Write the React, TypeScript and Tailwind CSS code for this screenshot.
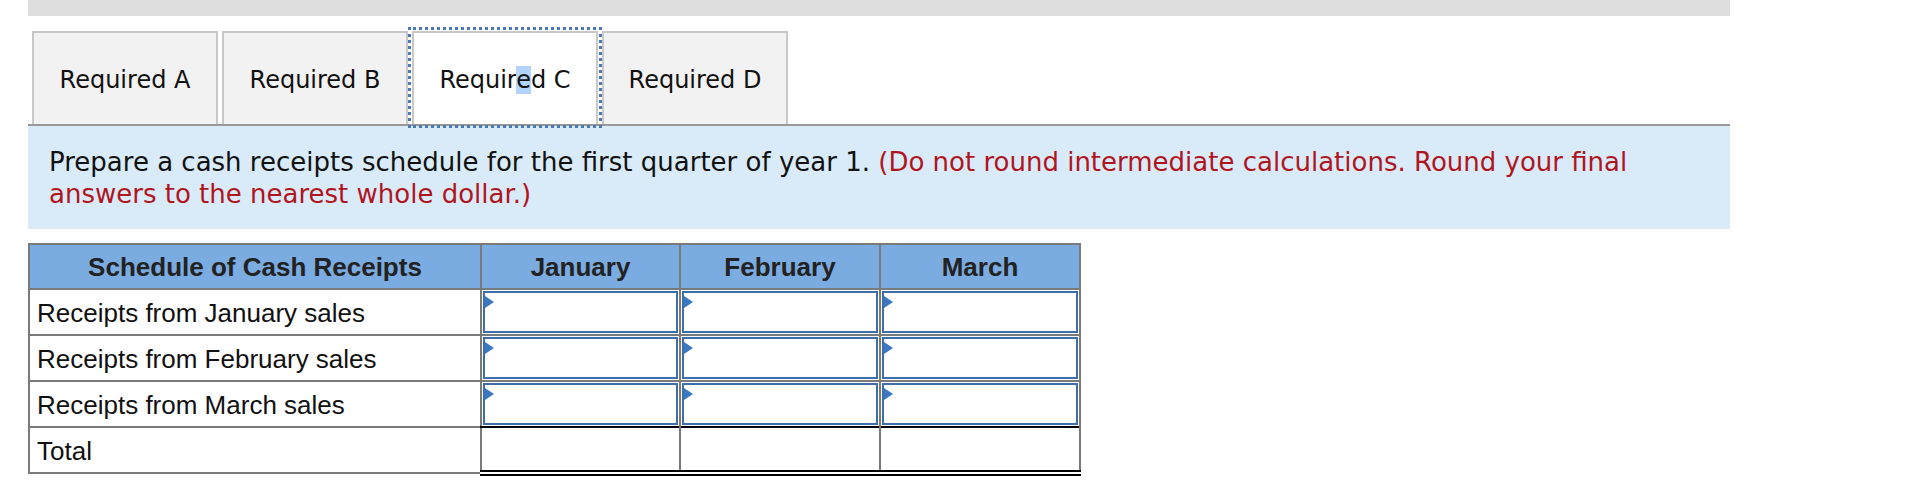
import React from 'react';

const TABS = ['Required A', 'Required B', 'Required C', 'Required D'];
const ROWS = ['Receipts from January sales', 'Receipts from February sales', 'Receipts from March sales'];
const MONTHS = ['January', 'February', 'March'];

const Tab = ({ label, active }: { label: string; active: boolean }) => {
  if (active) {
    return (
      <div className="relative w-[186px] h-[93px] pt-[2px] border-2 border-b-0 border-[#c8c8c8] bg-white flex items-center justify-center outline-[3px] outline-dotted outline-[#4a7ab5] outline-offset-[1px]">
        <span>
          Requir<span className="bg-[#b3d4fc]">e</span>d C
        </span>
      </div>
    );
  }
  return (
    <div className="w-[186px] h-[93px] pt-[2px] border-2 border-b-0 border-[#c8c8c8] bg-[#f2f2f2] flex items-center justify-center">
      {label}
    </div>
  );
};

const InputCell = () => (
  <td className="border-2 border-[#7a7a7a] p-[1px] h-[46px]">
    <div className="relative h-full border-2 border-[#3f6fab] bg-white">
      <span className="absolute left-0 top-[3px] w-0 h-0 border-y-[6px] border-y-transparent border-l-[9px] border-l-[#3a78c3]" />
    </div>
  </td>
);

export default function App() {
  return (
    <div className="w-[1906px] h-[484px] bg-white text-[#111]">
      <div className="ml-[28px] w-[1702px] h-[16px] bg-[#dedede]" />

      <div className="ml-[28px] w-[1702px] mt-[15px]">
        <div className="flex gap-[4px] pl-[4px] text-[24px] leading-none" style={{ fontFamily: '"DejaVu Sans", sans-serif' }}>
          {TABS.map((t, i) => (
            <Tab key={t} label={t} active={i === 2} />
          ))}
        </div>

        <div
          className="border-t-2 border-[#999] bg-[#d9ebf8] h-[105px] pl-[21px] pt-[20px] text-[26px] leading-[32px]"
          style={{ fontFamily: '"DejaVu Sans", sans-serif' }}
        >
          Prepare a cash receipts schedule for the first quarter of year 1.{' '}
          <span className="text-[#b0151e]">
            (Do not round intermediate calculations. Round your final
            <br />
            answers to the nearest whole dollar.)
          </span>
        </div>
      </div>

      <table
        className="ml-[28px] mt-[14px] border-collapse table-fixed text-[26px] text-[#111]"
        style={{ fontFamily: '"Liberation Sans", Arial, sans-serif' }}
      >
        <colgroup>
          <col className="w-[452px]" />
          <col className="w-[199px]" />
          <col className="w-[200px]" />
          <col className="w-[200px]" />
        </colgroup>
        <thead>
          <tr className="bg-[#7aabe1] h-[45px]">
            <th className="border-2 border-[#7a7a7a] pt-[2px] font-bold text-[#222]">Schedule of Cash Receipts</th>
            {MONTHS.map((m) => (
              <th key={m} className="border-2 border-[#7a7a7a] pt-[2px] font-bold text-[#222]">
                {m}
              </th>
            ))}
          </tr>
        </thead>
        <tbody>
          {ROWS.map((r) => (
            <tr key={r}>
              <td className="border-2 border-[#7a7a7a] px-[7px] pt-[2px] h-[46px] whitespace-nowrap">{r}</td>
              <InputCell />
              <InputCell />
              <InputCell />
            </tr>
          ))}
          <tr>
            <td className="border-2 border-[#7a7a7a] px-[7px] pt-[2px] h-[46px]">Total</td>
            {MONTHS.map((m) => (
              <td
                key={m}
                className="border-x-2 border-x-[#7a7a7a] border-t-2 border-t-black border-b-[6px] border-b-black border-double h-[46px]"
              />
            ))}
          </tr>
        </tbody>
      </table>
    </div>
  );
}
